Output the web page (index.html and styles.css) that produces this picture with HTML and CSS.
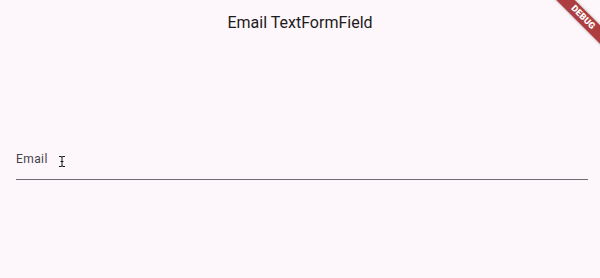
FILE: index.html
```html
<!DOCTYPE html>
<html>
<head>
<meta charset="utf-8">
<link rel="stylesheet" href="styles.css">
</head>
<body>
<div class="app">
  <header class="appbar"><h1 class="title">Email TextFormField</h1></header>
  <main class="body">
    <div class="field">
      <div class="input-row">
        <span class="label">Email</span>
        <svg class="ibeam" width="8" height="13" viewBox="0 0 8 13">
          <path d="M1 1.5 H3 Q4 1.5 4 2.5 Q4 1.5 5 1.5 H7 M4 2.5 V10.5 M1 11.5 H3 Q4 11.5 4 10.5 Q4 11.5 5 11.5 H7 M2.5 6.5 H5.5" fill="none" stroke="#fff" stroke-width="2.4" stroke-linecap="round"/>
          <path d="M1 1.5 H3 Q4 1.5 4 2.5 Q4 1.5 5 1.5 H7 M4 2.5 V10.5 M1 11.5 H3 Q4 11.5 4 10.5 Q4 11.5 5 11.5 H7 M2.5 6.5 H5.5" fill="none" stroke="#111" stroke-width="1"/>
        </svg>
      </div>
    </div>
  </main>
  <div class="banner-clip"><div class="banner">DEBUG</div></div>
</div>
</body>
</html>
```
FILE: styles.css
```css
html, body {
  margin: 0;
  padding: 0;
}
body {
  width: 600px;
  height: 278px;
  overflow: hidden;
  background: #fdf7fb;
  font-family: Roboto, "Noto Sans", sans-serif;
}
.app {
  position: relative;
  width: 600px;
  height: 278px;
  overflow: hidden;
  display: flex;
  flex-direction: column;
}
.appbar {
  height: 45px;
  display: flex;
  align-items: center;
  justify-content: center;
}
.title {
  margin: 0;
  font-size: 16px;
  font-weight: 400;
  color: #1d1b20;
  line-height: 20px;
}
.body {
  padding: 105px 12px 0 16px;
}
.field {
  border-bottom: 1px solid #6f6a74;
  padding-bottom: 11px;
}
.input-row {
  display: flex;
  align-items: center;
  height: 18px;
}
.label {
  font-size: 12px;
  letter-spacing: 0.4px;
  color: #45414b;
  line-height: 16px;
}
.ibeam {
  margin-left: 10px;
  margin-top: 4px;
}
.banner-clip {
  position: absolute;
  right: 0;
  top: 0;
  width: 60px;
  height: 60px;
  overflow: hidden;
}
.banner {
  position: absolute;
  left: -7px;
  top: 11px;
  width: 100px;
  height: 13px;
  transform: rotate(45deg);
  background: #ad3d3f;
  color: #fff;
  font-size: 9px;
  font-weight: 900;
  line-height: 13px;
  text-align: center;
  letter-spacing: 0.2px;
  box-shadow: 0 0 3px rgba(0,0,0,0.35);
}
```
